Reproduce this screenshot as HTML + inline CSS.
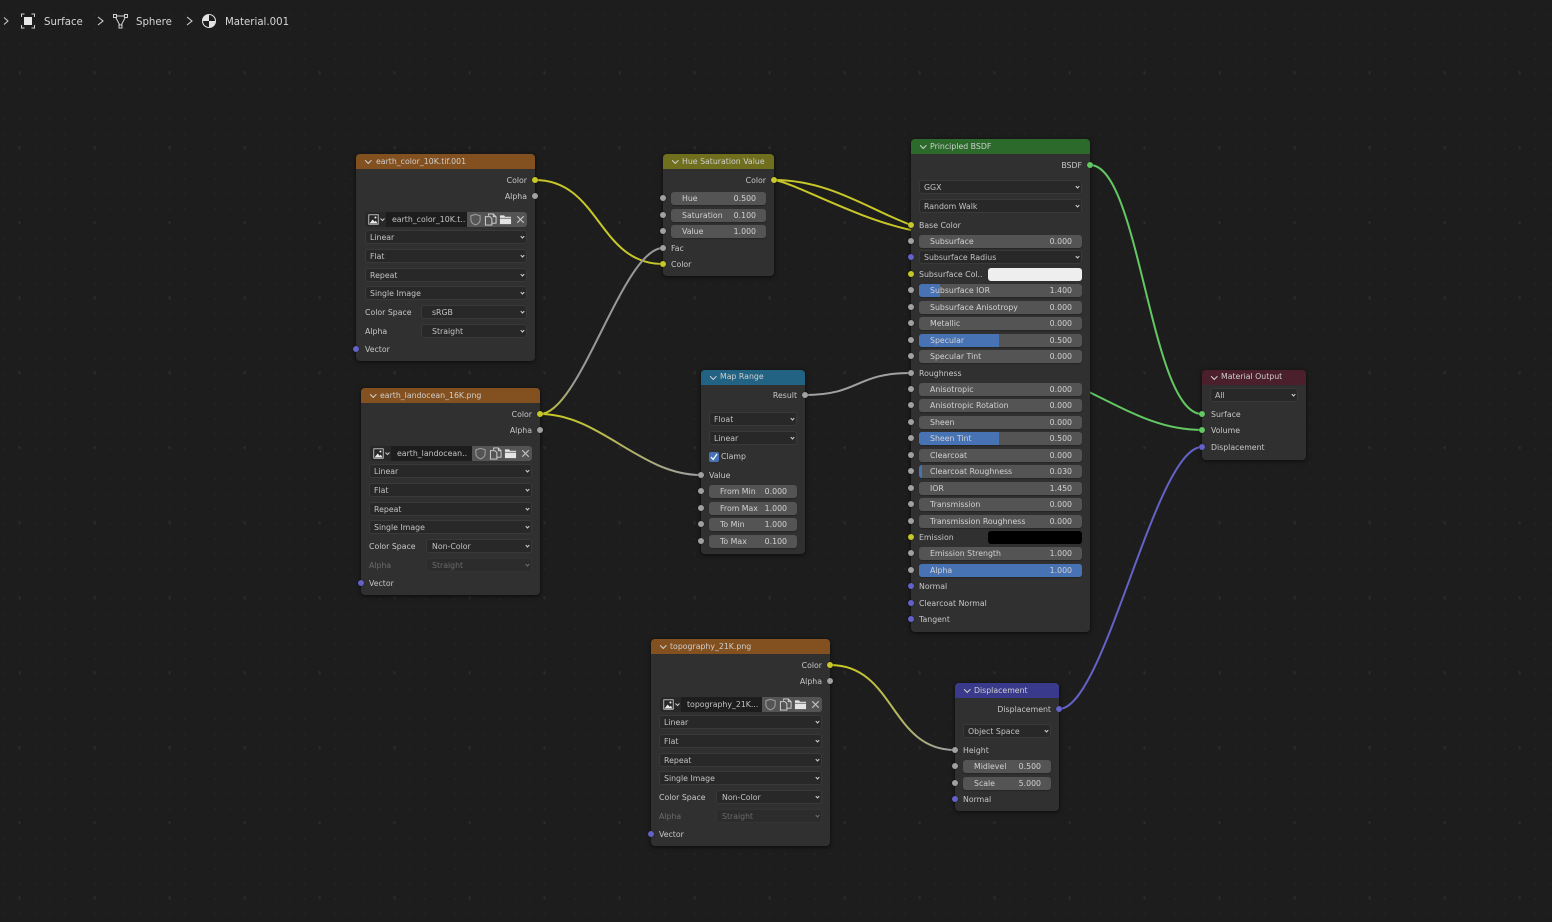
<!DOCTYPE html>
<html><head><meta charset="utf-8"><title>Shader Editor</title>
<style>
html,body{margin:0;padding:0;width:1552px;height:922px;overflow:hidden}
body{position:relative;background-color:#1d1d1d;background-image:radial-gradient(circle at 1.5px 1.5px,#2a2a2a 1.2px,transparent 1.6px),radial-gradient(circle at 1px 1px,#252525 .7px,transparent 1px);background-size:75px 75px,15px 15px;background-position:18px 71px,4px 13px;font:7.8px/12px "DejaVu Sans",sans-serif;color:#c8c8c8}
svg{position:absolute;overflow:visible}
.top{position:absolute;top:16px;font-size:10.2px;line-height:14px;color:#d6d6d6}
.n{position:absolute;background:#303030;border-radius:4px;box-shadow:0 1px 5px rgba(0,0,0,.65)}
.h{position:absolute;left:0;right:0;top:0;height:15px;border-radius:4px 4px 0 0;line-height:15px;padding-left:19px;box-sizing:border-box;color:#cfcfcf;white-space:nowrap}
.h:before{content:"";position:absolute;left:9.500px;top:4px;width:3.5px;height:3.5px;border-right:1px solid #d0d0d0;border-bottom:1px solid #d0d0d0;transform:rotate(45deg)}
.l,.r{position:absolute;white-space:nowrap;margin-top:1px}
.l{left:8px}.r{right:8px}
.o{position:absolute;width:6px;height:6px;margin:-3px;border-radius:50%;background:#a1a1a1;box-shadow:0 0 1px #000;z-index:3}
.y{background:#c7c729}.b{background:#6363c7}.g{background:#63c763}
.d,.s{position:absolute;left:8px;right:8px;height:13px;border-radius:3px;line-height:13px;white-space:nowrap;box-sizing:border-box}
.d{height:14px;background:#282828;border:1px solid #393939;padding-left:4px;line-height:14px;color:#c4c4c4}
.d:after{content:"";position:absolute;right:2.5px;top:3.5px;width:2px;height:2px;border-right:1px solid #d0d0d0;border-bottom:1px solid #d0d0d0;transform:rotate(45deg)}
.off{opacity:.38}
.s{background:#545454;overflow:hidden;box-shadow:0 1px 1px #252525}
.s i{position:absolute;left:0;top:0;bottom:0;background:#4772b3}
.s span{position:absolute;left:11px;color:#d2d2d2}
.s b{position:absolute;right:10px;font-weight:normal;color:#d2d2d2}
.w{position:absolute;left:77px;right:8px;height:13px;border-radius:3px}
.t .l{left:9px}
.t .d{left:9px}
.t .lo{left:65px}
.t .x{position:absolute;top:58px;height:15px}
.c1{left:9px;width:21px;background:#282828;border-radius:3px 0 0 3px}
.c2{left:30px;width:81px;background:#1d1d1d;line-height:15px;padding-left:6px;box-sizing:border-box;white-space:nowrap;overflow:hidden;color:#c4c4c4}
.c3{background:#545454}
.c3 svg{left:1.500px;top:1px}
</style></head><body>
<svg width="0" height="0" style="position:absolute"><defs>
<symbol id="pic" viewBox="0 0 14 14"><rect x="1" y="1" width="12" height="12" fill="none" stroke="#ddd" stroke-width="1"/><path d="M2 12l4-5 2.500 3 1.500-1.500L12 12z" fill="#eee"/><circle cx="9.500" cy="4.500" r="1.300" fill="#eee"/></symbol>
<symbol id="sh" viewBox="0 0 14 14"><path d="M7 1.500l5 1.500v4c0 3-2 4.800-5 5.800-3-1-5-2.800-5-5.800V3z" fill="none" stroke="#9a9a9a" stroke-width="1.200"/></symbol>
<symbol id="cp" viewBox="0 0 14 14"><path d="M5 3V1h5l3 3v7H9M1.500 4h5l2 2v7h-7zM10 1v3h3" fill="none" stroke="#d8d8d8" stroke-width="1"/></symbol>
<symbol id="fo" viewBox="0 0 14 14"><path d="M1 2.500h4.500l1 1.500H13v1.200H1zM1 6h12v6H1z" fill="#e4e4e4"/></symbol>
<symbol id="xx" viewBox="0 0 14 14"><path d="M3.500 3.500l7 7M10.500 3.500l-7 7" stroke="#c4c4c4" stroke-width="1.300" fill="none"/></symbol>
<linearGradient id="g1" gradientUnits="userSpaceOnUse" x1="545" y1="0" x2="575" y2="0"><stop offset="0" stop-color="#c7c729"/><stop offset="1" stop-color="#999"/></linearGradient>
<linearGradient id="g2" gradientUnits="userSpaceOnUse" x1="560" y1="0" x2="690" y2="0"><stop offset="0" stop-color="#c7c729"/><stop offset="1" stop-color="#a1a1a1"/></linearGradient>
<linearGradient id="g3" gradientUnits="userSpaceOnUse" x1="850" y1="0" x2="950" y2="0"><stop offset="0" stop-color="#c7c729"/><stop offset="1" stop-color="#a1a1a1"/></linearGradient>
</defs></svg>

<svg style="left:0;top:0" width="1552" height="922" fill="none" stroke-width="2">
<path d="M535 180C600 180 598 264 663 264" stroke="#c7c729"/>
<path d="M540 414C580 414 623 248 663 248" stroke="url(#g1)"/>
<path d="M540 414C600 414 640 475 701 475" stroke="url(#g2)"/>
<path d="M805 395C860 395 855 373 911 373" stroke="#a1a1a1"/>
<path d="M774 180C830 180 870 210 911 225" stroke="#c7c729"/>
<path d="M774 180C795 183 855 218 911 230" stroke="#c7c729"/>
<path d="M1090 165C1140 165 1150 414 1202 414" stroke="#63c763"/>
<path d="M1085 390C1130 412 1160 430 1202 430" stroke="#63c763"/>
<path d="M1059 709C1105 709 1155 447 1202 447" stroke="#6363c7"/>
<path d="M830 665C895 665 890 750 955 750" stroke="url(#g3)"/>
</svg>

<svg style="left:0;top:0" width="320" height="40" fill="none" stroke="#d0d0d0">
<path d="M4 17.500l4 3.500-4 3.500" stroke-width="1"/>
<path d="M98 17l5 4-5 4M187 17l5 4-5 4" stroke-width="1.100"/>
<path d="M21.500 17v-3h3M31.500 14h3v3M21.500 25v3h3M31.500 28h3v-3" stroke-width="1"/>
<rect x="24" y="17" width="8" height="8" fill="#e8e8e8" stroke="none"/>
<path d="M115 16h11l-5.500 10.500z" stroke-width="1"/>
<rect x="113.500" y="14.500" width="3" height="3" fill="#1d1d1d" stroke-width="1"/><rect x="124.500" y="14.500" width="3" height="3" fill="#1d1d1d" stroke-width="1"/><rect x="119" y="25" width="3" height="3" fill="#1d1d1d" stroke-width="1"/>
<circle cx="209" cy="21" r="6.500" stroke="#dcdcdc" stroke-width="1.100" fill="#1d1d1d"/>
<path d="M209 21H202.500A6.500 6.500 0 0 1 209 14.500zM209 21h6.500A6.500 6.500 0 0 1 209 27.500z" fill="#e2e2e2" stroke="none"/>
</svg>
<div class="top" style="left:44px">Surface</div>
<div class="top" style="left:136px">Sphere</div>
<div class="top" style="left:225px">Material.001</div>

<!-- earth_color -->
<div class="n t" style="left:356px;top:154px;width:179px;height:207px">
<div class="h" style="background:#83501f;padding-left:20px">earth_color_10K.tif.001</div>
<div class="r" style="top:20px">Color</div><div class="o y" style="left:179px;top:26px"></div>
<div class="r" style="top:36px">Alpha</div><div class="o" style="left:179px;top:42px"></div>
<div class="x c1"><svg style="left:3px;top:2px" width="11" height="11"><use href="#pic"/></svg><svg style="left:15px;top:5px" width="5" height="5" fill="none" stroke="#ccc"><path d="M.5 1.500l2 2 2-2"/></svg></div>
<div class="x c2">earth_color_10K.t..</div>
<div class="x c3" style="left:111px;width:15px"><svg width="13" height="13"><use href="#sh"/></svg></div>
<div class="x c3" style="left:126px;width:15px"><svg width="13" height="13"><use href="#cp"/></svg></div>
<div class="x c3" style="left:141px;width:15px"><svg width="13" height="13"><use href="#fo"/></svg></div>
<div class="x c3" style="left:156px;width:15px;border-radius:0 3px 3px 0"><svg width="13" height="13"><use href="#xx"/></svg></div>
<div class="d" style="top:76px">Linear</div>
<div class="d" style="top:95px">Flat</div>
<div class="d" style="top:114px">Repeat</div>
<div class="d" style="top:132px">Single Image</div>
<div class="l" style="top:152px">Color Space</div><div class="d lo" style="top:151px;padding-left:10px">sRGB</div>
<div class="l" style="top:171px">Alpha</div><div class="d lo" style="top:170px;padding-left:10px">Straight</div>
<div class="l" style="top:189px">Vector</div><div class="o b" style="left:0;top:195px"></div>
</div>

<!-- earth_landocean -->
<div class="n t" style="left:361px;top:388px;width:179px;height:207px">
<div class="h" style="background:#83501f">earth_landocean_16K.png</div>
<div class="r" style="top:20px">Color</div><div class="o y" style="left:179px;top:26px"></div>
<div class="r" style="top:36px">Alpha</div><div class="o" style="left:179px;top:42px"></div>
<div class="x c1"><svg style="left:3px;top:2px" width="11" height="11"><use href="#pic"/></svg><svg style="left:15px;top:5px" width="5" height="5" fill="none" stroke="#ccc"><path d="M.5 1.500l2 2 2-2"/></svg></div>
<div class="x c2">earth_landocean..</div>
<div class="x c3" style="left:111px;width:15px"><svg width="13" height="13"><use href="#sh"/></svg></div>
<div class="x c3" style="left:126px;width:15px"><svg width="13" height="13"><use href="#cp"/></svg></div>
<div class="x c3" style="left:141px;width:15px"><svg width="13" height="13"><use href="#fo"/></svg></div>
<div class="x c3" style="left:156px;width:15px;border-radius:0 3px 3px 0"><svg width="13" height="13"><use href="#xx"/></svg></div>
<div class="d" style="top:76px;left:8px">Linear</div>
<div class="d" style="top:95px;left:8px">Flat</div>
<div class="d" style="top:114px;left:8px">Repeat</div>
<div class="d" style="top:132px;left:8px">Single Image</div>
<div class="l" style="top:152px;left:8px">Color Space</div><div class="d lo" style="top:151px;padding-left:5px">Non-Color</div>
<div class="l off" style="top:171px;left:8px">Alpha</div><div class="d lo off" style="top:170px;padding-left:5px">Straight</div>
<div class="l" style="top:189px;left:8px">Vector</div><div class="o b" style="left:0;top:195px"></div>
</div>

<!-- topography -->
<div class="n t" style="left:651px;top:639px;width:179px;height:207px">
<div class="h" style="background:#83501f">topography_21K.png</div>
<div class="r" style="top:20px">Color</div><div class="o y" style="left:179px;top:26px"></div>
<div class="r" style="top:36px">Alpha</div><div class="o" style="left:179px;top:42px"></div>
<div class="x c1"><svg style="left:3px;top:2px" width="11" height="11"><use href="#pic"/></svg><svg style="left:15px;top:5px" width="5" height="5" fill="none" stroke="#ccc"><path d="M.5 1.500l2 2 2-2"/></svg></div>
<div class="x c2">topography_21K...</div>
<div class="x c3" style="left:111px;width:15px"><svg width="13" height="13"><use href="#sh"/></svg></div>
<div class="x c3" style="left:126px;width:15px"><svg width="13" height="13"><use href="#cp"/></svg></div>
<div class="x c3" style="left:141px;width:15px"><svg width="13" height="13"><use href="#fo"/></svg></div>
<div class="x c3" style="left:156px;width:15px;border-radius:0 3px 3px 0"><svg width="13" height="13"><use href="#xx"/></svg></div>
<div class="d" style="top:76px;left:8px">Linear</div>
<div class="d" style="top:95px;left:8px">Flat</div>
<div class="d" style="top:114px;left:8px">Repeat</div>
<div class="d" style="top:132px;left:8px">Single Image</div>
<div class="l" style="top:152px;left:8px">Color Space</div><div class="d lo" style="top:151px;padding-left:5px">Non-Color</div>
<div class="l off" style="top:171px;left:8px">Alpha</div><div class="d lo off" style="top:170px;padding-left:5px">Straight</div>
<div class="l" style="top:189px;left:8px">Vector</div><div class="o b" style="left:0;top:195px"></div>
</div>

<!-- HSV -->
<div class="n" style="left:663px;top:154px;width:111px;height:122px">
<div class="h" style="background:#6f6f1e">Hue Saturation Value</div>
<div class="r" style="top:20px">Color</div><div class="o y" style="left:111px;top:26px"></div>
<div class="o" style="left:0;top:44px"></div><div class="s" style="top:38px"><span>Hue</span><b>0.500</b></div>
<div class="o" style="left:0;top:61px"></div><div class="s" style="top:55px"><span>Saturation</span><b>0.100</b></div>
<div class="o" style="left:0;top:77px"></div><div class="s" style="top:71px"><span>Value</span><b>1.000</b></div>
<div class="o" style="left:0;top:94px"></div><div class="l" style="top:88px">Fac</div>
<div class="o y" style="left:0;top:110px"></div><div class="l" style="top:104px">Color</div>
</div>

<!-- Map Range -->
<div class="n" style="left:701px;top:370px;width:104px;height:184px">
<div class="h" style="background:#226383;line-height:13px">Map Range</div>
<div class="r" style="top:19px">Result</div><div class="o" style="left:104px;top:25px"></div>
<div class="d" style="top:42px">Float</div>
<div class="d" style="top:61px">Linear</div>
<svg style="left:8px;top:82px" width="10" height="10"><rect width="10" height="10" rx="2" fill="#4772b3"/><path d="M2 5l2.200 2.500L8 2" stroke="#fff" stroke-width="1.300" fill="none"/></svg>
<div class="l" style="top:80px;left:20px">Clamp</div>
<div class="o" style="left:0;top:105px"></div><div class="l" style="top:99px">Value</div>
<div class="o" style="left:0;top:121px"></div><div class="s" style="top:115px"><span>From Min</span><b>0.000</b></div>
<div class="o" style="left:0;top:138px"></div><div class="s" style="top:132px"><span>From Max</span><b>1.000</b></div>
<div class="o" style="left:0;top:154px"></div><div class="s" style="top:148px"><span>To Min</span><b>1.000</b></div>
<div class="o" style="left:0;top:171px"></div><div class="s" style="top:165px"><span>To Max</span><b>0.100</b></div>
</div>

<!-- Principled -->
<div class="n" style="left:911px;top:139px;width:179px;height:493px">
<div class="h" style="background:#2b6a2b">Principled BSDF</div>
<div class="r" style="top:20px">BSDF</div><div class="o g" style="left:179px;top:26px"></div>
<div class="d" style="top:41px">GGX</div>
<div class="d" style="top:60px">Random Walk</div>
<div class="o y" style="left:0;top:86px"></div><div class="l" style="top:80px">Base Color</div>
<div class="o" style="left:0;top:102px"></div><div class="s" style="top:96px"><span>Subsurface</span><b>0.000</b></div>
<div class="o b" style="left:0;top:118px"></div><div class="d" style="top:111px">Subsurface Radius</div>
<div class="o y" style="left:0;top:135px"></div><div class="l" style="top:129px">Subsurface Col..</div><div class="w" style="top:129px;background:#eeeeee"></div>
<div class="o" style="left:0;top:151px"></div><div class="s" style="top:145px"><i style="width:21px"></i><span>Subsurface IOR</span><b>1.400</b></div>
<div class="o" style="left:0;top:168px"></div><div class="s" style="top:162px"><span>Subsurface Anisotropy</span><b>0.000</b></div>
<div class="o" style="left:0;top:184px"></div><div class="s" style="top:178px"><span>Metallic</span><b>0.000</b></div>
<div class="o" style="left:0;top:201px"></div><div class="s" style="top:195px"><i style="width:80px"></i><span>Specular</span><b>0.500</b></div>
<div class="o" style="left:0;top:217px"></div><div class="s" style="top:211px"><span>Specular Tint</span><b>0.000</b></div>
<div class="o" style="left:0;top:234px"></div><div class="l" style="top:228px">Roughness</div>
<div class="o" style="left:0;top:250px"></div><div class="s" style="top:244px"><span>Anisotropic</span><b>0.000</b></div>
<div class="o" style="left:0;top:266px"></div><div class="s" style="top:260px"><span>Anisotropic Rotation</span><b>0.000</b></div>
<div class="o" style="left:0;top:283px"></div><div class="s" style="top:277px"><span>Sheen</span><b>0.000</b></div>
<div class="o" style="left:0;top:299px"></div><div class="s" style="top:293px"><i style="width:80px"></i><span>Sheen Tint</span><b>0.500</b></div>
<div class="o" style="left:0;top:316px"></div><div class="s" style="top:310px"><span>Clearcoat</span><b>0.000</b></div>
<div class="o" style="left:0;top:332px"></div><div class="s" style="top:326px"><i style="width:3px"></i><span>Clearcoat Roughness</span><b>0.030</b></div>
<div class="o" style="left:0;top:349px"></div><div class="s" style="top:343px"><span>IOR</span><b>1.450</b></div>
<div class="o" style="left:0;top:365px"></div><div class="s" style="top:359px"><span>Transmission</span><b>0.000</b></div>
<div class="o" style="left:0;top:382px"></div><div class="s" style="top:376px"><span>Transmission Roughness</span><b>0.000</b></div>
<div class="o y" style="left:0;top:398px"></div><div class="l" style="top:392px">Emission</div><div class="w" style="top:392px;background:#000"></div>
<div class="o" style="left:0;top:414px"></div><div class="s" style="top:408px"><span>Emission Strength</span><b>1.000</b></div>
<div class="o" style="left:0;top:431px"></div><div class="s" style="top:425px"><i style="width:100%"></i><span>Alpha</span><b>1.000</b></div>
<div class="o b" style="left:0;top:447px"></div><div class="l" style="top:441px">Normal</div>
<div class="o b" style="left:0;top:464px"></div><div class="l" style="top:458px">Clearcoat Normal</div>
<div class="o b" style="left:0;top:480px"></div><div class="l" style="top:474px">Tangent</div>
</div>

<!-- Material Output -->
<div class="n" style="left:1202px;top:370px;width:104px;height:90px">
<div class="h" style="background:#4b1f2c;line-height:13px">Material Output</div>
<div class="d" style="top:18px">All</div>
<div class="o g" style="left:0;top:44px"></div><div class="l" style="top:38px;left:9px">Surface</div>
<div class="o g" style="left:0;top:60px"></div><div class="l" style="top:54px;left:9px">Volume</div>
<div class="o b" style="left:0;top:77px"></div><div class="l" style="top:71px;left:9px">Displacement</div>
</div>

<!-- Displacement -->
<div class="n" style="left:955px;top:683px;width:104px;height:128px">
<div class="h" style="background:#3a3a8c">Displacement</div>
<div class="r" style="top:20px">Displacement</div><div class="o b" style="left:104px;top:26px"></div>
<div class="d" style="top:41px">Object Space</div>
<div class="o" style="left:0;top:67px"></div><div class="l" style="top:61px">Height</div>
<div class="o" style="left:0;top:83px"></div><div class="s" style="top:77px"><span>Midlevel</span><b>0.500</b></div>
<div class="o" style="left:0;top:100px"></div><div class="s" style="top:94px"><span>Scale</span><b>5.000</b></div>
<div class="o b" style="left:0;top:116px"></div><div class="l" style="top:110px">Normal</div>
</div>
</body></html>
